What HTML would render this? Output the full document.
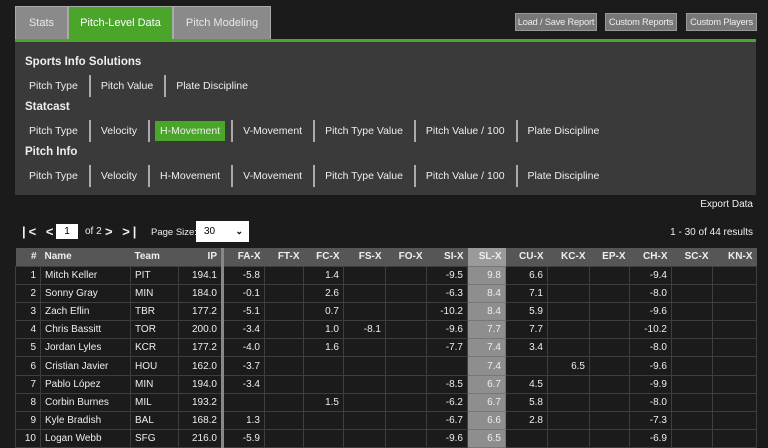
<!DOCTYPE html>
<html><head><meta charset="utf-8"><style>
*{box-sizing:border-box;margin:0;padding:0}
body{width:768px;height:447px;overflow:hidden;background:#1b1b1b;font-family:"Liberation Sans",sans-serif;color:#eee;position:relative;font-size:11px}
.tab{position:absolute;top:6px;height:33px;line-height:33px;text-align:center;background:#8a8a8a;color:#e8e8e8;font-size:11px;border:1px solid #aaa;border-bottom:none}
.btn{position:absolute;top:13px;height:18px;line-height:16px;background:#777;border:1px solid #999;color:#eee;font-size:9.3px;text-align:center;white-space:nowrap;letter-spacing:-0.2px}
.gl{position:absolute;left:15px;top:39px;width:741px;height:3px;background:#4aa52a}
.panel{position:absolute;left:15px;top:42px;width:741px;height:153px;background:#3a3a3a}
.h{position:absolute;left:10px;font-weight:bold;font-size:11.5px;color:#eee}
.row{position:absolute;left:10px;display:flex;height:22px;align-items:center;font-size:10.5px}
.row span{padding:0 11px 0 10px;height:22px;line-height:22px;border-right:2px solid #aaa;white-space:nowrap}
.row span:first-child{padding-left:4px}
.row span:last-child{border-right:none}
.row span.on{background:#4aa52a;height:20px;line-height:20px;padding:0 5px;margin:0 6px 0 5px;border-right:none}
table{position:absolute;left:15px;top:248px;border-collapse:collapse;table-layout:fixed;width:741px;font-size:10px}
th{background:#565656;height:18px;font-weight:bold;text-align:right;padding:0 4px;color:#eee;border:none}
td{height:18.2px;text-align:right;padding:0 4px;border:1px solid #3e3e3e;white-space:nowrap}
td.l,th.l{text-align:left}
.sl{background:#9a9a9a!important;color:#eee}
td.sl{background:#8e8e8e!important;border-color:#777}
.sep{border-right:3px solid #888}
</style></head><body>
<div class="tab" style="left:15px;width:53px">Stats</div>
<div class="tab" style="left:68px;width:105px;background:#4aa52a;color:#fff">Pitch-Level Data</div>
<div class="tab" style="left:173px;width:98px">Pitch Modeling</div>
<div class="btn" style="left:515px;width:82px">Load / Save Report</div>
<div class="btn" style="left:605px;width:72px">Custom Reports</div>
<div class="btn" style="left:686px;width:71px">Custom Players</div>
<div class="gl"></div>
<div class="panel">
<div class="h" style="top:14px">Sports Info Solutions</div>
<div class="row" style="top:33px"><span>Pitch Type</span><span>Pitch Value</span><span>Plate Discipline</span></div>
<div class="h" style="top:59px">Statcast</div>
<div class="row" style="top:78px"><span>Pitch Type</span><span>Velocity</span><span class="on">H-Movement</span><span style="border-left:2px solid #aaa">V-Movement</span><span>Pitch Type Value</span><span>Pitch Value / 100</span><span>Plate Discipline</span></div>
<div class="h" style="top:104px">Pitch Info</div>
<div class="row" style="top:123px"><span>Pitch Type</span><span>Velocity</span><span>H-Movement</span><span>V-Movement</span><span>Pitch Type Value</span><span>Pitch Value / 100</span><span>Plate Discipline</span></div>
</div>
<div style="position:absolute;right:15px;top:199px;font-size:10px">Export Data</div>
<div style="position:absolute;left:22px;top:224px;font-size:13px;font-weight:bold;letter-spacing:3px">|&lt; &lt;</div>
<div style="position:absolute;left:56px;top:224px;width:22px;height:15px;background:#fff;color:#000;font-size:10px;text-align:center;line-height:15px">1</div>
<div style="position:absolute;left:85px;top:226px;font-size:10px">of 2</div>
<div style="position:absolute;left:105px;top:224px;font-size:13px;font-weight:bold;letter-spacing:3px">&gt; &gt;|</div>
<div style="position:absolute;left:151px;top:227px;font-size:9.5px">Page Size:</div>
<div style="position:absolute;left:196px;top:221px;width:53px;height:21px;background:#fff;color:#000;font-size:10px;line-height:21px;padding-left:8px">30<span style="position:absolute;right:6px;font-size:9px;font-weight:bold">⌄</span></div>
<div style="position:absolute;right:15px;top:227px;font-size:10px">1 - 30 of 44 results</div>
<table>
<colgroup><col style="width:25px"><col style="width:90px"><col style="width:48px"><col style="width:44px"><col style="width:42px"><col style="width:39px"><col style="width:40px"><col style="width:42px"><col style="width:41px"><col style="width:41px"><col style="width:38px"><col style="width:42px"><col style="width:42px"><col style="width:40px"><col style="width:42px"><col style="width:41px"><col style="width:44px"></colgroup>
<tr><th>#</th><th class="l">Name</th><th class="l">Team</th><th class="sep">IP</th><th>FA-X</th><th>FT-X</th><th>FC-X</th><th>FS-X</th><th>FO-X</th><th>SI-X</th><th class="sl">SL-X</th><th>CU-X</th><th>KC-X</th><th>EP-X</th><th>CH-X</th><th>SC-X</th><th>KN-X</th></tr>
<tr><td>1</td><td class="l">Mitch Keller</td><td class="l">PIT</td><td class="sep">194.1</td><td>-5.8</td><td></td><td>1.4</td><td></td><td></td><td>-9.5</td><td class="sl">9.8</td><td>6.6</td><td></td><td></td><td>-9.4</td><td></td><td></td></tr>
<tr><td>2</td><td class="l">Sonny Gray</td><td class="l">MIN</td><td class="sep">184.0</td><td>-0.1</td><td></td><td>2.6</td><td></td><td></td><td>-6.3</td><td class="sl">8.4</td><td>7.1</td><td></td><td></td><td>-8.0</td><td></td><td></td></tr>
<tr><td>3</td><td class="l">Zach Eflin</td><td class="l">TBR</td><td class="sep">177.2</td><td>-5.1</td><td></td><td>0.7</td><td></td><td></td><td>-10.2</td><td class="sl">8.4</td><td>5.9</td><td></td><td></td><td>-9.6</td><td></td><td></td></tr>
<tr><td>4</td><td class="l">Chris Bassitt</td><td class="l">TOR</td><td class="sep">200.0</td><td>-3.4</td><td></td><td>1.0</td><td>-8.1</td><td></td><td>-9.6</td><td class="sl">7.7</td><td>7.7</td><td></td><td></td><td>-10.2</td><td></td><td></td></tr>
<tr><td>5</td><td class="l">Jordan Lyles</td><td class="l">KCR</td><td class="sep">177.2</td><td>-4.0</td><td></td><td>1.6</td><td></td><td></td><td>-7.7</td><td class="sl">7.4</td><td>3.4</td><td></td><td></td><td>-8.0</td><td></td><td></td></tr>
<tr><td>6</td><td class="l">Cristian Javier</td><td class="l">HOU</td><td class="sep">162.0</td><td>-3.7</td><td></td><td></td><td></td><td></td><td></td><td class="sl">7.4</td><td></td><td>6.5</td><td></td><td>-9.6</td><td></td><td></td></tr>
<tr><td>7</td><td class="l">Pablo López</td><td class="l">MIN</td><td class="sep">194.0</td><td>-3.4</td><td></td><td></td><td></td><td></td><td>-8.5</td><td class="sl">6.7</td><td>4.5</td><td></td><td></td><td>-9.9</td><td></td><td></td></tr>
<tr><td>8</td><td class="l">Corbin Burnes</td><td class="l">MIL</td><td class="sep">193.2</td><td></td><td></td><td>1.5</td><td></td><td></td><td>-6.2</td><td class="sl">6.7</td><td>5.8</td><td></td><td></td><td>-8.0</td><td></td><td></td></tr>
<tr><td>9</td><td class="l">Kyle Bradish</td><td class="l">BAL</td><td class="sep">168.2</td><td>1.3</td><td></td><td></td><td></td><td></td><td>-6.7</td><td class="sl">6.6</td><td>2.8</td><td></td><td></td><td>-7.3</td><td></td><td></td></tr>
<tr><td>10</td><td class="l">Logan Webb</td><td class="l">SFG</td><td class="sep">216.0</td><td>-5.9</td><td></td><td></td><td></td><td></td><td>-9.6</td><td class="sl">6.5</td><td></td><td></td><td></td><td>-6.9</td><td></td><td></td></tr>
</table>
</body></html>
